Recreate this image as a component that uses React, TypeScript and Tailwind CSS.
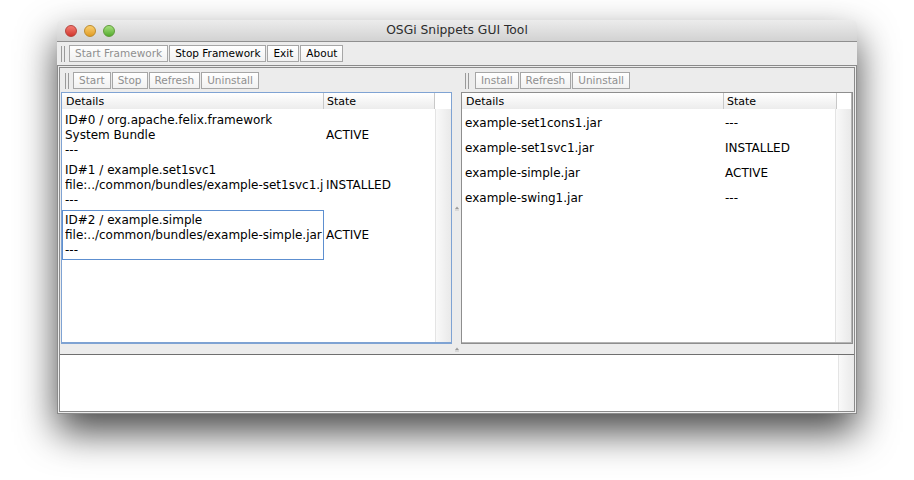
import React from 'react';

const font = { fontFamily: '"Lucida Grande", "DejaVu Sans", sans-serif' };

function Btn({ label, disabled }: { label: string; disabled?: boolean }) {
  return (
    <div
      className={`h-[17px] px-[5px] flex items-center border border-[#a6a6a6] bg-gradient-to-b from-white to-[#f1f1f1] text-[10.5px] leading-none ${disabled ? 'text-[#8f8f8f]' : 'text-black'}`}
    >
      {label}
    </div>
  );
}

function Grip() {
  return (
    <div className="flex gap-[2px] h-[16px] mr-[3px]">
      <div className="w-[1px] bg-[#9a9a9a]" />
      <div className="w-[1px] bg-[#9a9a9a]" />
    </div>
  );
}

function Track() {
  return <div className="w-[16px] border-l border-[#e4e4e4] bg-gradient-to-r from-[#f9f9f9] to-[#e9e9e9]" />;
}

function Header({ w1, w2 }: { w1: number; w2: number }) {
  return (
    <div className="flex h-[16px] text-[11px] leading-none shrink-0">
      <div className="flex items-center pl-[4px] bg-gradient-to-b from-white to-[#ececec] border-r border-[#c8c8c8]" style={{ width: w1 }}>
        Details
      </div>
      <div className="flex items-center pl-[3px] bg-gradient-to-b from-white to-[#ececec] border-r border-[#c8c8c8]" style={{ width: w2 }}>
        State
      </div>
      <div className="flex-1 bg-white" />
    </div>
  );
}

const bundles = [
  { lines: ['ID#0 / org.apache.felix.framework', 'System Bundle', '---'], state: 'ACTIVE' },
  { lines: ['ID#1 / example.set1svc1', 'file:../common/bundles/example-set1svc1.jar', '---'], state: 'INSTALLED' },
  { lines: ['ID#2 / example.simple', 'file:../common/bundles/example-simple.jar', '---'], state: 'ACTIVE', sel: true },
];

const files = [
  ['example-set1cons1.jar', '---'],
  ['example-set1svc1.jar', 'INSTALLED'],
  ['example-simple.jar', 'ACTIVE'],
  ['example-swing1.jar', '---'],
];

function Arrow() {
  return (
    <svg width="6" height="6" viewBox="0 0 6 6">
      <path d="M1 4 L3 1.5 L5 4 Z" fill="#9a9a9a" />
      <path d="M1 5 L5 5" stroke="#c4c4c4" strokeWidth="1" />
    </svg>
  );
}

export default function App() {
  return (
    <div className="w-[914px] h-[480px] bg-white pt-[20px] pl-[57px] text-black" style={font}>
      <div className="w-[800px] h-[394px] flex flex-col rounded-t-[5px] shadow-[0_18px_38px_rgba(0,0,0,0.72)] bg-[#ececec]">
        {/* title bar */}
        <div className="h-[22px] shrink-0 relative rounded-t-[5px] bg-gradient-to-b from-[#ececec] to-[#d2d2d2] border-b border-[#8f8f8f] flex items-center justify-center">
          <div className="absolute left-[8px] top-[5px] flex gap-[7px]">
            <div className="w-[12px] h-[12px] rounded-full bg-gradient-to-b from-[#f47a72] to-[#d1342c] border border-[#b5433c]" />
            <div className="w-[12px] h-[12px] rounded-full bg-gradient-to-b from-[#f9cf6e] to-[#e19c1f] border border-[#bd8b2c]" />
            <div className="w-[12px] h-[12px] rounded-full bg-gradient-to-b from-[#a6e07c] to-[#53ab2c] border border-[#5f9b3a]" />
          </div>
          <span className="text-[12.3px] text-[#2d2d2d] leading-none">OSGi Snippets GUI Tool</span>
        </div>
        {/* main toolbar */}
        <div className="h-[23px] shrink-0 flex items-center pl-[4px]">
          <Grip />
          <div className="flex gap-[1px] ml-[1px]">
            <Btn label="Start Framework" disabled />
            <Btn label="Stop Framework" />
            <Btn label="Exit" />
            <Btn label="About" />
          </div>
        </div>
        {/* content */}
        <div className="flex-1 flex flex-col border-[3px] border-double border-[#8a8a8a] bg-[#ececec]">
          <div className="h-[276px] flex shrink-0">
            {/* left pane */}
            <div className="w-[393px] flex flex-col">
              <div className="h-[24px] flex items-center pl-[5px] pt-[1px]">
                <Grip />
                <div className="flex gap-[1px] ml-[1px]">
                  <Btn label="Start" disabled />
                  <Btn label="Stop" disabled />
                  <Btn label="Refresh" disabled />
                  <Btn label="Uninstall" disabled />
                </div>
              </div>
              <div className="flex-1 flex flex-col ml-[1px] border border-b-2 border-[#7fa3d3] bg-white">
                <Header w1={262} w2={111} />
                <div className="flex-1 flex">
                  <div className="w-[373px] pt-[1px]">
                    {bundles.map((b, i) => (
                      <div key={i} className="h-[50px] flex text-[12px]">
                        <div
                          className={`w-[262px] pl-[2px] flex flex-col justify-center leading-[15px] overflow-hidden whitespace-nowrap ${b.sel ? 'border border-[#5d8fd0]' : 'border border-transparent'}`}
                        >
                          {b.lines.map((l, j) => (
                            <div key={j} className="overflow-hidden">{l}</div>
                          ))}
                        </div>
                        <div className="flex items-center pl-[2px]">{b.state}</div>
                      </div>
                    ))}
                  </div>
                  <Track />
                </div>
              </div>
            </div>
            {/* vertical divider */}
            <div className="w-[9px] flex items-center justify-center pt-[4px]">
              <Arrow />
            </div>
            {/* right pane */}
            <div className="flex-1 flex flex-col pr-[1px]">
              <div className="h-[24px] flex items-center pl-[4px] pt-[1px]">
                <Grip />
                <div className="flex gap-[1px] ml-[3px]">
                  <Btn label="Install" disabled />
                  <Btn label="Refresh" disabled />
                  <Btn label="Uninstall" disabled />
                </div>
              </div>
              <div className="flex-1 flex flex-col border border-[#8e8e8e] bg-white">
                <div className="flex-1 flex flex-col border-r border-b border-[#b4b4b4]">
                  <Header w1={262} w2={113} />
                  <div className="flex-1 flex">
                    <div className="w-[373px] pt-[1px]">
                      {files.map(([n, s]) => (
                        <div key={n} className="h-[25px] flex items-center text-[12px]">
                          <div className="w-[262px] pl-[3px]">{n}</div>
                          <div className="pl-[1px]">{s}</div>
                        </div>
                      ))}
                    </div>
                    <Track />
                  </div>
                </div>
              </div>
            </div>
          </div>
          {/* horizontal divider */}
          <div className="h-[10px] shrink-0 flex items-center pl-[394px]">
            <Arrow />
          </div>
          {/* bottom pane */}
          <div className="flex-1 flex bg-white border-t border-[#6f6f6f]">
            <div className="flex-1" />
            <Track />
          </div>
        </div>
      </div>
    </div>
  );
}
